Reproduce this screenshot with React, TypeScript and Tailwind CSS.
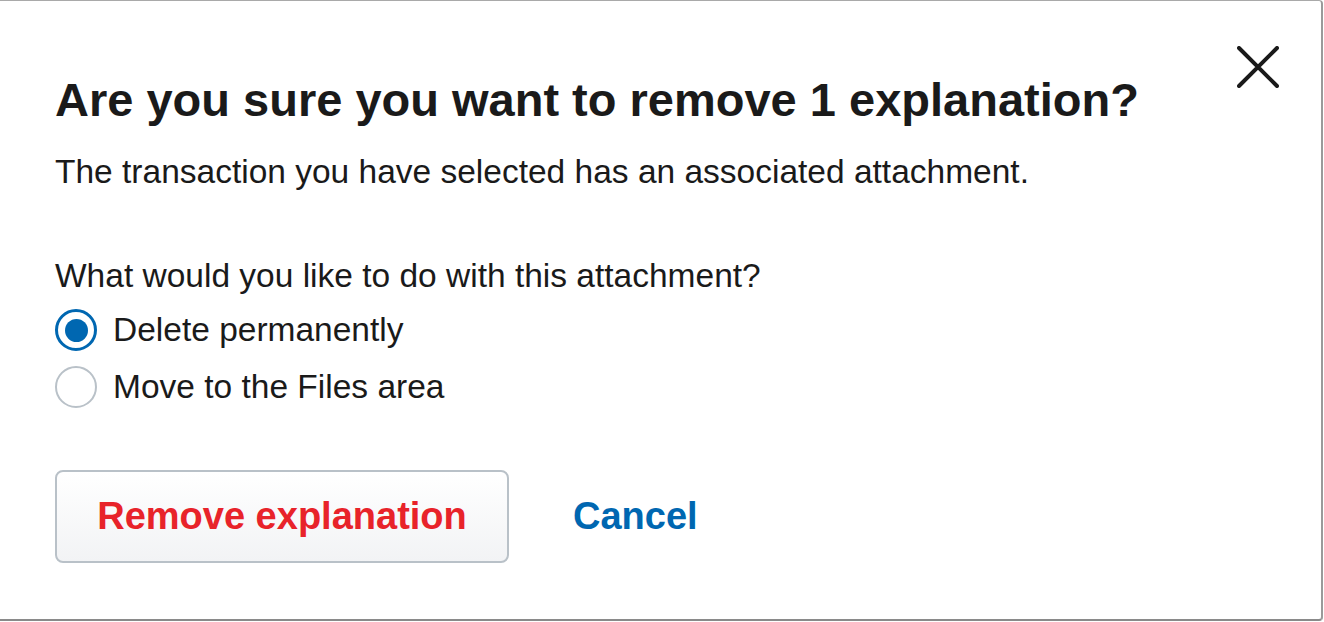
import React, { useState } from "react";

export default function App() {
  const [choice, setChoice] = useState("delete");
  return (
    <div className="w-[1324px] h-[622px] bg-white" style={{ fontFamily: '"Liberation Sans", Arial, sans-serif' }}>
      <div className="relative w-[1323px] h-[621px] border-t border-r-2 border-b-2 border-t-[#a9a9a9] border-r-[#9a9a9a] border-b-[#8a8a8a] rounded-r-[4px] bg-white pl-[55px] pt-[72px]">
        <button className="absolute right-[42px] top-[45px] w-[42px] h-[42px] text-[#1a1a1a]" aria-label="Close">
          <svg viewBox="0 0 42 42" width="42" height="42" fill="none" stroke="currentColor" strokeWidth="4" strokeLinecap="round">
            <path d="M2 2 L40 40 M40 2 L2 40" />
          </svg>
        </button>
        <h1 className="text-[47px] leading-[54px] font-bold text-[#1a1a1a]">
          Are you sure you want to remove 1 explanation?
        </h1>
        <p className="mt-[25px] text-[33.5px] leading-[40px] text-[#1a1a1a]">
          The transaction you have selected has an associated attachment.
        </p>
        <p className="mt-[64px] text-[33.5px] leading-[40px] text-[#1a1a1a]">
          What would you like to do with this attachment?
        </p>
        <div className="mt-[13px] flex flex-col gap-[15px]">
          <label className="flex items-center gap-[16px] cursor-pointer" onClick={() => setChoice("delete")}>
            <span className={`w-[42px] h-[42px] rounded-full flex items-center justify-center ${choice === "delete" ? "border-[3px] border-[#0067b1]" : "border-2 border-[#b9c1c8]"}`}>
              {choice === "delete" && <span className="w-[23px] h-[23px] rounded-full bg-[#0067b1]" />}
            </span>
            <span className="text-[33.5px] leading-[40px] text-[#1a1a1a]">Delete permanently</span>
          </label>
          <label className="flex items-center gap-[16px] cursor-pointer" onClick={() => setChoice("move")}>
            <span className={`w-[42px] h-[42px] rounded-full flex items-center justify-center ${choice === "move" ? "border-[3px] border-[#0067b1]" : "border-2 border-[#b9c1c8]"}`}>
              {choice === "move" && <span className="w-[23px] h-[23px] rounded-full bg-[#0067b1]" />}
            </span>
            <span className="text-[33.5px] leading-[40px] text-[#1a1a1a]">Move to the Files area</span>
          </label>
        </div>
        <div className="mt-[62px] flex items-center gap-[64px]">
          <button className="w-[454px] h-[93px] rounded-[8px] border-2 border-[#b9c1c8] bg-gradient-to-b from-white to-[#f2f3f5] text-[38px] font-bold text-[#e8232a]">
            Remove explanation
          </button>
          <button className="text-[38px] font-bold text-[#0067b1]">Cancel</button>
        </div>
      </div>
    </div>
  );
}
